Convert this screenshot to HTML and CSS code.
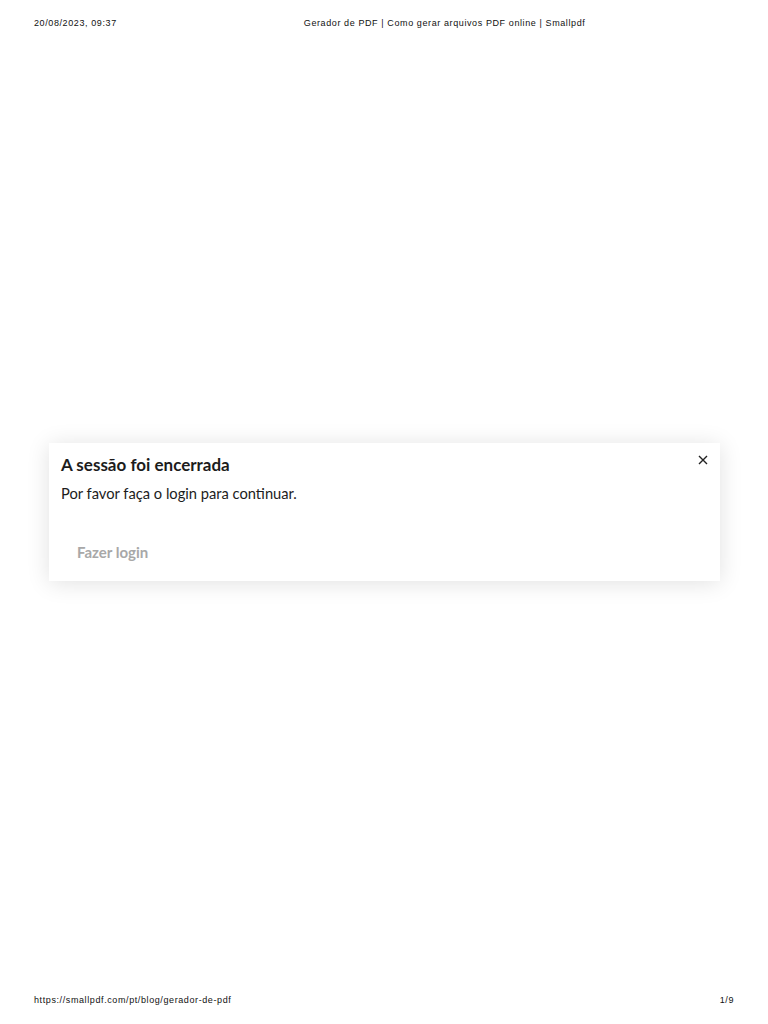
FILE: index.html
```html
<!DOCTYPE html>
<html>
<head>
    <title>Gerador de PDF | Como gerar arquivos PDF online | Smallpdf</title>
    <link rel="stylesheet" href="styles.css">
</head>
<body>

<div class="print-head">
    <span class="print-date">20/08/2023, 09:37</span>
    <span class="print-title">Gerador de PDF | Como gerar arquivos PDF online | Smallpdf</span>
</div>

<div class="page">
    <div class="session-card">
        <div class="session-top">
            <h3 class="session-title">A sessão foi encerrada</h3>
            <span class="session-close">
                <svg width="10" height="10" viewBox="0 0 10 10">
                    <path d="M1 1 L9 9 M9 1 L1 9" stroke="#222" stroke-width="1.4" fill="none"/>
                </svg>
            </span>
        </div>
        <p class="session-text">Por favor faça o login para continuar.</p>
        <div class="session-actions">
            <span class="login-btn">Fazer login</span>
        </div>
    </div>
</div>

<div class="print-foot">
    <span>https://smallpdf.com/pt/blog/gerador-de-pdf</span>
    <span>1/9</span>
</div>

</body>
</html>
```

FILE: styles.css
```css
html, body {
    margin: 0;
    background: white;
}

body {
    height: 1024px;
    display: flex;
    flex-direction: column;
    font-family: "Liberation Sans", Arial, sans-serif;
}

.print-head, .print-foot {
    font-size: 9px;
    color: #111;
    display: flex;
    padding: 0 34px;
    line-height: 11px;
    letter-spacing: 0.6px;
}

.print-head {
    padding-top: 18px;
}
.print-title {
    margin-left: 187px;
}

.print-foot {
    justify-content: space-between;
    padding-bottom: 18px;
}

.page {
    flex: 1;
    padding-top: 414px;
}

.session-card {
    margin-left: 49px;
    width: 671px;
    height: 138px;
    box-sizing: border-box;
    padding: 11px 12px 0 12px;
    background: white;
    box-shadow: 0 2px 22px rgba(0, 0, 0, 0.12);
    font-family: Lato, "Open Sans", sans-serif;
    color: #1c1c1c;
}

.session-top {
    display: flex;
    justify-content: space-between;
}

.session-title {
    margin: 0;
    font-size: 17px;
    line-height: 22px;
    font-weight: bold;
}

.session-close {
    margin-top: -5px;
    margin-right: 0;
}

.session-text {
    margin: 7px 0 0 0;
    font-size: 14.7px;
    line-height: 20px;
}

.session-actions {
    margin-top: 39px;
    padding-left: 16px;
}

.login-btn {
    font-size: 15px;
    font-weight: bold;
    color: #a8a8a8;
}
```
